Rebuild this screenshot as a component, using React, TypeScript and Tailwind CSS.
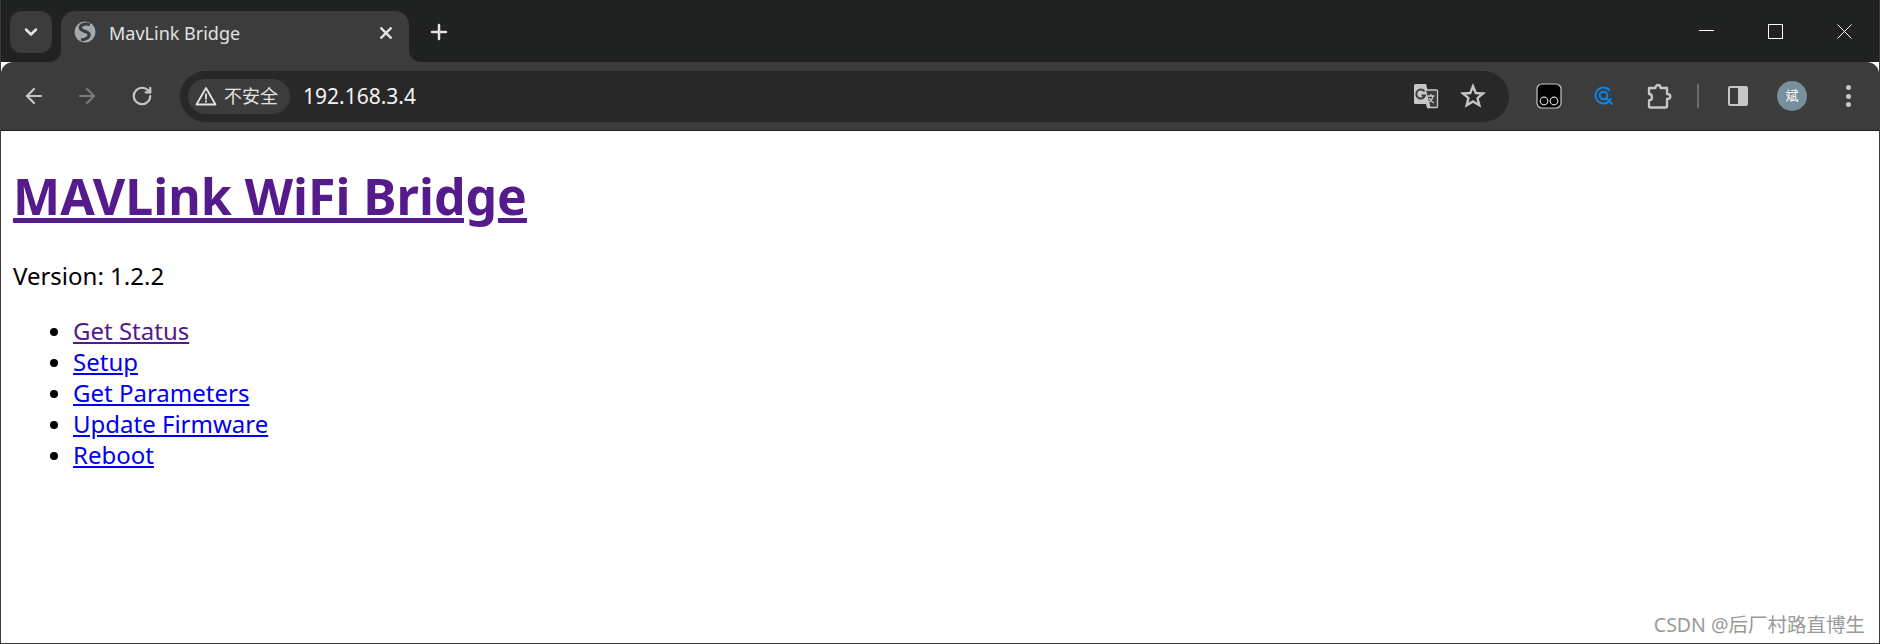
import { ArrowLeft, ArrowRight, ChevronDown, Plus, RotateCw } from 'lucide-react'

const links = [
  { label: 'Get Status', visited: true },
  { label: 'Setup', visited: false },
  { label: 'Get Parameters', visited: false },
  { label: 'Update Firmware', visited: false },
  { label: 'Reboot', visited: false },
]

function TabFlare({ side }: { side: 'left' | 'right' }) {
  return (
    <svg
      width="12"
      height="12"
      viewBox="0 0 12 12"
      className={side === 'left' ? 'absolute bottom-0 -left-3' : 'absolute bottom-0 -right-3'}
    >
      <path d={side === 'left' ? 'M12 0v12H0A12 12 0 0 0 12 0z' : 'M0 0v12h12A12 12 0 0 1 0 0z'} fill="#3c3c3c" />
    </svg>
  )
}

function CrossIcon({ size, stroke, width }: { size: number; stroke: string; width: number }) {
  return (
    <svg width={size} height={size} viewBox={`0 0 ${size} ${size}`} fill="none" stroke={stroke} strokeWidth={width} className="shrink-0">
      <path d={`M0.500 0.500 ${size - 0.5} ${size - 0.5}M${size - 0.5} 0.500 0.500 ${size - 0.5}`} />
    </svg>
  )
}

function GlobeIcon() {
  return (
    <svg width="22" height="22" viewBox="0 0 22 22" className="shrink-0">
      <circle cx="11" cy="11" r="10.500" fill="#a4a9ae" />
      <path d="M16 3.500C10 2 5.500 4.500 6.500 7.500S14 10 15 13s-3 5.500-8 6" fill="none" stroke="#3c3c3c" strokeWidth="3.200" />
    </svg>
  )
}

function TranslateIcon() {
  return (
    <svg width="26" height="26" viewBox="0 0 26 26">
      <path d="M2.500 1H13l5 20H2.500A1.500 1.500 0 0 1 1 19.500v-17A1.500 1.500 0 0 1 2.500 1z" fill="#c7c7c7" />
      <path d="M13 7h10.500a1 1 0 0 1 1 1v15.500a1 1 0 0 1-1 1H14" fill="#3c3c3c" stroke="#c7c7c7" strokeWidth="1.300" />
      <path d="M13 7 17.500 24.500H14L12 18H9z" fill="#c7c7c7" />
      <path d="M11.500 8.500a4.500 4.500 0 1 0 .5 4H8.500" fill="none" stroke="#3c3c3c" strokeWidth="2" />
      <path d="M14.500 13h7M18 11v2M20 13c-.5 3-3 6-5.500 7M16 15c1 2 3 4 5 5" fill="none" stroke="#c7c7c7" strokeWidth="1.300" />
    </svg>
  )
}

function StarIcon() {
  return (
    <svg width="26" height="26" viewBox="0 0 26 26" fill="none" stroke="#c7c7c7" strokeWidth="2.400" strokeLinejoin="miter">
      <path d="M13 3.200 15.800 10 23 10.500 17.500 15.200 19.300 22.300 13 18.500 6.700 22.300 8.500 15.200 3 10.500 10.200 10z" />
    </svg>
  )
}

function GhostIcon() {
  return (
    <svg width="26" height="26" viewBox="0 0 26 26">
      <rect x="1" y="1" width="24" height="24" rx="5" fill="#000" stroke="#c7c7c7" strokeWidth="1.200" />
      <circle cx="8" cy="18" r="3.800" fill="#000" stroke="#d8d8d8" strokeWidth="1.200" />
      <circle cx="18" cy="18" r="3.800" fill="#000" stroke="#d8d8d8" strokeWidth="1.200" />
    </svg>
  )
}

function BlueSearchIcon() {
  return (
    <svg width="20" height="20" viewBox="0 0 20 20" fill="none" stroke="#0a84e8" strokeWidth="2">
      <circle cx="9.500" cy="9.500" r="8" strokeDasharray="42 8" transform="rotate(20 9.500 9.500)" />
      <circle cx="9.500" cy="9.500" r="3.800" />
      <path d="M12.500 12.500 18 18" strokeLinecap="round" />
    </svg>
  )
}

function PuzzleIcon() {
  return (
    <svg width="26" height="26" viewBox="0 0 26 26" fill="none" stroke="#c7c7c7" strokeWidth="2.300" strokeLinejoin="round">
      <path d="M2 5h6.500c0-4 5-4 5 0H20v6c4.500 0 4.500 5 0 5v7.500a1 1 0 0 1-1 1H3a1 1 0 0 1-1-1v-6c4 0 4-6.500 0-6.500z" />
    </svg>
  )
}

function SidePanelIcon() {
  return (
    <svg width="22" height="22" viewBox="0 0 22 22">
      <rect x="1" y="1" width="20" height="20" rx="2" fill="#c7c7c7" />
      <rect x="3" y="3" width="8" height="16" fill="#3c3c3c" />
    </svg>
  )
}

export default function App() {
  return (
    <div className="relative flex h-[644px] w-[1880px] flex-col border-x border-b border-[#3a3a3a] bg-white font-['Noto_Sans','Noto_Sans_CJK_SC',sans-serif]">
      <div className="flex h-[62px] shrink-0 bg-[#202221]">
        <div className="ml-[9px] mt-[11px] flex h-[42px] w-[42px] items-center justify-center rounded-xl bg-[#3c3c3c] text-[#e3e3e3]">
          <ChevronDown size={20} strokeWidth={3} />
        </div>
        <div className="relative ml-[9px] mt-[11px] flex h-[51px] w-[348px] items-start rounded-t-[14px] bg-[#3c3c3c] pl-[13px] pr-[17px] pt-[10px]">
          <TabFlare side="left" />
          <GlobeIcon />
          <span className="ml-[13px] flex-1 text-[18px] leading-[24px] text-[#e3e3e3]">MavLink Bridge</span>
          <div className="mt-[6px]">
            <CrossIcon size={12} stroke="#e3e3e3" width={2.4} />
          </div>
          <TabFlare side="right" />
        </div>
        <div className="ml-[18px] mt-[20px] h-6 text-[#e3e3e3]">
          <Plus size={24} strokeWidth={2.5} />
        </div>
        <div className="ml-auto mr-[27px] flex items-start gap-[54px] pt-[24px] text-white">
          <div className="mt-[6px] h-px w-[15px] bg-white" />
          <div className="h-[15px] w-[15px] border border-white" />
          <CrossIcon size={15} stroke="#ffffff" width={1} />
        </div>
      </div>

      <div className="flex h-[69px] shrink-0 items-center rounded-t-xl border-b border-[#1f1f1f] bg-[#3c3c3c]">
        <ArrowLeft size={24} strokeWidth={2.2} className="ml-[21px] text-[#c7c7c7]" />
        <ArrowRight size={24} strokeWidth={2.2} className="ml-[29px] text-[#7a7a7a]" />
        <RotateCw size={22} strokeWidth={2.4} className="ml-[32px] text-[#c7c7c7]" />
        <div className="ml-[27px] flex h-[51px] w-[1329px] items-center rounded-full bg-[#282828] pl-[8px] pr-[23px]">
          <div className="flex h-[35px] w-[102px] items-center rounded-full bg-[#3c3c3c] pl-[7px] text-[#e3e3e3]">
            <svg width="22" height="20" viewBox="0 0 22 20" fill="none" stroke="#e3e3e3" strokeWidth="1.800" strokeLinejoin="round">
              <path d="M11 2 20.500 18.500H1.500z" />
              <path d="M11 7.500v6M11 14.500v2" />
            </svg>
            <span className="ml-[7px] text-[18px] leading-none">不安全</span>
          </div>
          <span className="ml-[13px] flex-1 text-[21px] leading-none text-[#f2f2f2]">192.168.3.4</span>
          <TranslateIcon />
          <div className="ml-[21px]"><StarIcon /></div>
        </div>
        <div className="ml-[27px] flex items-center">
          <GhostIcon />
          <div className="ml-[32px]"><BlueSearchIcon /></div>
          <div className="ml-[33px]"><PuzzleIcon /></div>
          <div className="ml-[24px] h-[24px] w-[2px] bg-[#6a6a6a]" />
          <div className="ml-[28px]"><SidePanelIcon /></div>
          <div className="ml-[28px] flex h-[30px] w-[30px] items-center justify-center rounded-full bg-[#78909c] text-[13px] text-white">斌</div>
          <div className="ml-[39px] flex flex-col gap-[3.500px]">
            <span className="h-[5px] w-[5px] rounded-full bg-[#c7c7c7]" />
            <span className="h-[5px] w-[5px] rounded-full bg-[#c7c7c7]" />
            <span className="h-[5px] w-[5px] rounded-full bg-[#c7c7c7]" />
          </div>
        </div>
      </div>

      <div className="flex-1 pl-3 pt-[33px] text-[24px] leading-[31px] text-black">
        <h1 className="text-[50px] font-bold leading-[64px]">
          <a href="#" className="text-[#551a8b] underline">MAVLink WiFi Bridge</a>
        </h1>
        <p className="mt-[32px]">Version: 1.2.2</p>
        <ul className="mt-[24px] list-disc pl-[60px] marker:text-[22px]">
          {links.map((link) => (
            <li key={link.label}>
              <a href="#" className={link.visited ? 'text-[#551a8b] underline' : 'text-[#0000ee] underline'}>
                {link.label}
              </a>
            </li>
          ))}
        </ul>
      </div>

      <div className="absolute bottom-[6px] right-[14px] text-[19.500px] leading-6 text-[#9a9a9a]">CSDN @后厂村路直博生</div>
    </div>
  )
}
